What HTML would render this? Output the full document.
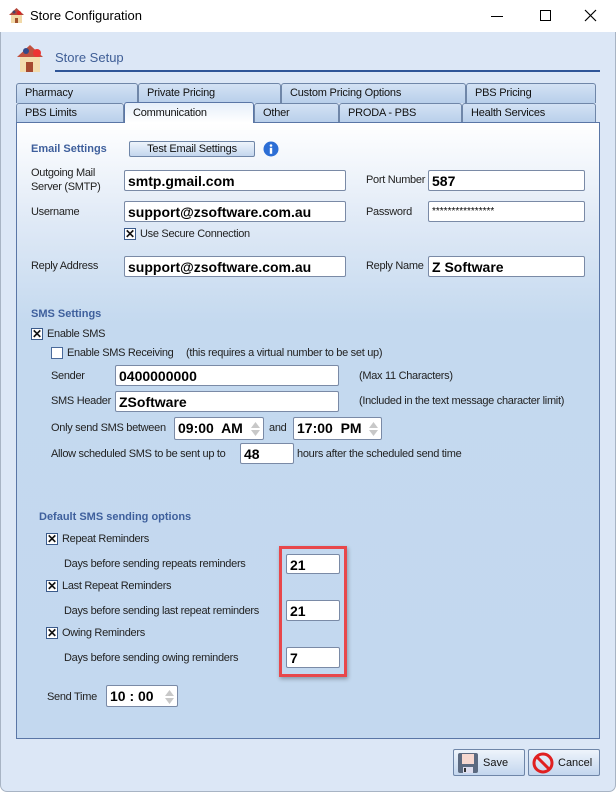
<!DOCTYPE html>
<html><head><meta charset="utf-8"><style>
*{box-sizing:border-box;margin:0;padding:0}
body{width:616px;height:792px;overflow:hidden;background:#fff;font-family:"Liberation Sans",Arial,sans-serif;font-size:11px;color:#111;position:relative}
.a{position:absolute;white-space:nowrap}
.win{position:absolute;left:0;top:32px;width:616px;height:760px;background:#dce7f6;border-left:1px solid #a8b4c4;border-right:1px solid #a8b4c4;border-bottom:1px solid #a8b4c4;border-radius:0 0 7px 7px}
.tab{position:absolute;height:20px;background:linear-gradient(#d3e2f4,#b8cfea);border:1px solid #6f86a8;border-bottom:none;border-radius:3px 3px 0 0;padding:3px 0 0 8px;font-size:11px;color:#111;letter-spacing:-0.2px}
.panel{position:absolute;left:16px;top:122px;width:584px;height:617px;border:1px solid #5a76a6;background:linear-gradient(#ffffff 0px,#dfe9f6 100px,#c4d9ef 200px,#c3d8ef 100%)}
.lbl{position:absolute;white-space:nowrap;font-size:11px;letter-spacing:-0.3px;color:#222;transform:translateY(-50%)}
.hd{position:absolute;white-space:nowrap;font-size:11px;font-weight:bold;color:#3e5f9c;transform:translateY(-50%)}
.in{position:absolute;background:#fff;border:1px solid #7a8aa6;border-radius:2px;font-weight:bold;font-size:14px;padding:1px 0 0 3px;color:#000;line-height:18px}
.cb{position:absolute;width:12px;height:12px;border:1px solid #3a5a8a;background:#fff;font-size:12px;line-height:10px;text-align:center;font-weight:bold}
.spin{position:absolute;right:2px;top:2px;width:11px;height:18px}
.btn{position:absolute;border:1px solid #6f86a8;border-radius:2px;background:linear-gradient(#eef4fb,#c3d6ee)}
</style></head><body>
<svg class="a" style="left:8px;top:7px" width="17" height="17" viewBox="0 0 17 17"><path d="M1 8 L8.5 1 L16 8 Z" fill="#b3463b"/><rect x="3" y="8" width="11" height="8" fill="#f1d9a8"/><rect x="7" y="11" width="3" height="5" fill="#a0522d"/><circle cx="11" cy="6" r="2" fill="#d22"/><circle cx="6" cy="5" r="1.5" fill="#446"/></svg>
<div class="a" style="left:30px;top:8px;font-size:13px;color:#000">Store Configuration</div>
<div class="a" style="left:491px;top:16px;width:12px;height:1px;background:#000"></div>
<div class="a" style="left:540px;top:10px;width:11px;height:11px;border:1px solid #000"></div>
<svg class="a" style="left:584px;top:9px" width="13" height="13"><path d="M1 1L12 12M12 1L1 12" stroke="#000" stroke-width="1.2"/></svg>
<div class="win"></div>
<svg class="a" style="left:15px;top:42px" width="32" height="32" viewBox="0 0 32 32"><path d="M2 15 L15 3 L28 15 Z" fill="#c0513f"/><rect x="5" y="15" width="20" height="15" fill="#f3dcae"/><rect x="11" y="20" width="7" height="10" fill="#a6492f"/><circle cx="22" cy="11" r="4" fill="#e33"/><circle cx="11" cy="9" r="3" fill="#334a8a"/></svg>
<div class="a" style="left:55px;top:50px;font-size:13px;color:#3f5e96">Store Setup</div>
<div class="a" style="left:55px;top:70px;width:545px;height:2px;background:#2f5597"></div>
<div class="tab" style="left:16px;top:83px;width:122px">Pharmacy</div>
<div class="tab" style="left:138px;top:83px;width:143px">Private Pricing</div>
<div class="tab" style="left:281px;top:83px;width:185px">Custom Pricing Options</div>
<div class="tab" style="left:466px;top:83px;width:130px">PBS Pricing</div>
<div class="tab" style="left:16px;top:103px;width:108px">PBS Limits</div>
<div class="tab" style="left:254px;top:103px;width:85px">Other</div>
<div class="tab" style="left:339px;top:103px;width:123px">PRODA - PBS</div>
<div class="tab" style="left:462px;top:103px;width:134px">Health Services</div>
<div class="panel"></div>
<div class="tab" style="left:124px;top:102px;width:130px;height:21px;background:linear-gradient(#e6effa,#fff);border-color:#5a76a6;z-index:2;padding-top:4px">Communication</div>
<div class="hd" style="left:31px;top:149px">Email Settings</div>
<div class="btn" style="left:129px;top:141px;width:126px;height:16px;font-size:11px;text-align:center;line-height:14px;letter-spacing:-0.2px">Test Email Settings</div>
<svg class="a" style="left:263px;top:141px" width="16" height="16"><circle cx="8" cy="8" r="7.5" fill="#2c6ed5"/><circle cx="8" cy="4.5" r="1.3" fill="#fff"/><rect x="6.8" y="6.8" width="2.4" height="6" fill="#fff"/></svg>
<div class="lbl" style="left:31px;top:180px;line-height:14px">Outgoing Mail<br>Server (SMTP)</div>
<div class="in" style="left:124px;top:170px;width:222px;height:21px">smtp.gmail.com</div>
<div class="lbl" style="left:366px;top:180px">Port Number</div>
<div class="in" style="left:428px;top:170px;width:157px;height:21px">587</div>
<div class="lbl" style="left:31px;top:212px">Username</div>
<div class="in" style="left:124px;top:201px;width:222px;height:21px">support@zsoftware.com.au</div>
<div class="lbl" style="left:366px;top:212px">Password</div>
<div class="in" style="left:428px;top:201px;width:157px;height:21px;font-size:10px;font-weight:normal">****************</div>
<div class="cb" style="left:124px;top:228px">✕</div>
<div class="lbl" style="left:140px;top:234px">Use Secure Connection</div>
<div class="lbl" style="left:31px;top:266px">Reply Address</div>
<div class="in" style="left:124px;top:256px;width:222px;height:21px">support@zsoftware.com.au</div>
<div class="lbl" style="left:366px;top:266px">Reply Name</div>
<div class="in" style="left:428px;top:256px;width:157px;height:21px">Z Software</div>
<div class="hd" style="left:31px;top:314px">SMS Settings</div>
<div class="cb" style="left:31px;top:328px">✕</div>
<div class="lbl" style="left:47px;top:334px">Enable SMS</div>
<div class="cb" style="left:51px;top:347px;border-color:#4a6a9a"></div>
<div class="lbl" style="left:67px;top:353px">Enable SMS Receiving</div>
<div class="lbl" style="left:186px;top:353px">(this requires a virtual number to be set up)</div>
<div class="lbl" style="left:51px;top:376px">Sender</div>
<div class="in" style="left:115px;top:365px;width:224px;height:21px">0400000000</div>
<div class="lbl" style="left:359px;top:376px">(Max 11 Characters)</div>
<div class="lbl" style="left:51px;top:401px">SMS Header</div>
<div class="in" style="left:115px;top:391px;width:224px;height:21px">ZSoftware</div>
<div class="lbl" style="left:359px;top:401px">(Included in the text message character limit)</div>
<div class="lbl" style="left:51px;top:428px">Only send SMS between</div>
<div class="in" style="left:174px;top:417px;width:90px;height:23px">09:00&nbsp; AM<svg class="spin" viewBox="0 0 11 18"><path d="M1 8L5.5 2L10 8Z M1 10L5.5 16L10 10Z" fill="#c8c8c8"/></svg></div>
<div class="lbl" style="left:269px;top:428px">and</div>
<div class="in" style="left:293px;top:417px;width:89px;height:23px">17:00&nbsp; PM<svg class="spin" viewBox="0 0 11 18"><path d="M1 8L5.5 2L10 8Z M1 10L5.5 16L10 10Z" fill="#c8c8c8"/></svg></div>
<div class="lbl" style="left:51px;top:454px">Allow scheduled SMS to be sent up to</div>
<div class="in" style="left:240px;top:443px;width:54px;height:21px">48</div>
<div class="lbl" style="left:297px;top:454px">hours after the scheduled send time</div>
<div class="hd" style="left:39px;top:517px">Default SMS sending options</div>
<div class="cb" style="left:46px;top:533px">✕</div>
<div class="lbl" style="left:62px;top:539px">Repeat Reminders</div>
<div class="lbl" style="left:64px;top:564px">Days before sending repeats reminders</div>
<div class="in" style="left:286px;top:554px;width:54px;height:20px">21</div>
<div class="cb" style="left:46px;top:580px">✕</div>
<div class="lbl" style="left:62px;top:586px">Last Repeat Reminders</div>
<div class="lbl" style="left:64px;top:611px">Days before sending last repeat reminders</div>
<div class="in" style="left:286px;top:600px;width:54px;height:21px">21</div>
<div class="cb" style="left:46px;top:627px">✕</div>
<div class="lbl" style="left:62px;top:633px">Owing Reminders</div>
<div class="lbl" style="left:64px;top:658px">Days before sending owing reminders</div>
<div class="in" style="left:286px;top:647px;width:54px;height:21px">7</div>
<div class="a" style="left:279px;top:546px;width:68px;height:131px;border:3px solid #e8474b;box-shadow:1px 2px 4px rgba(0,0,0,.3)"></div>
<div class="lbl" style="left:47px;top:697px">Send Time</div>
<div class="in" style="left:106px;top:685px;width:72px;height:22px">10 : 00<svg class="spin" viewBox="0 0 11 18"><path d="M1 8L5.5 2L10 8Z M1 10L5.5 16L10 10Z" fill="#c8c8c8"/></svg></div>
<div class="btn" style="left:453px;top:749px;width:72px;height:27px"><svg class="a" style="left:3px;top:2px" width="22" height="22"><rect x="1" y="1" width="20" height="20" rx="2" fill="#5c6a80"/><rect x="5" y="2" width="12" height="10" fill="#f6d8d0"/><rect x="6" y="15" width="10" height="6" fill="#dde"/><rect x="7" y="16" width="2" height="4" fill="#333"/></svg><span class="a" style="left:29px;top:7px">Save</span></div>
<div class="btn" style="left:528px;top:749px;width:72px;height:27px"><svg class="a" style="left:3px;top:2px" width="22" height="22"><circle cx="11" cy="11" r="9" fill="none" stroke="#e02020" stroke-width="3"/><path d="M5 5L17 17" stroke="#e02020" stroke-width="3"/></svg><span class="a" style="left:29px;top:7px">Cancel</span></div>
</body></html>
